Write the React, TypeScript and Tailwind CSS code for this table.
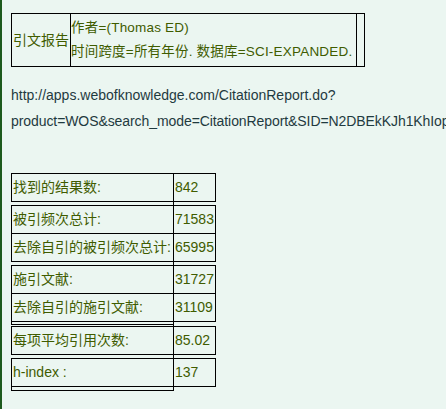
import React from 'react';

const stats = [
    [{ label: '找到的结果数:', value: '842' }],
    [
        { label: '被引频次总计:', value: '71583' },
        { label: '去除自引的被引频次总计:', value: '65995' },
    ],
    [
        { label: '施引文献:', value: '31727' },
        { label: '去除自引的施引文献:', value: '31109' },
    ],
    [{ label: '每项平均引用次数:', value: '85.02' }],
    [{ label: 'h-index :', value: '137' }],
];

// tables 3 and 5 have a left cell that hangs a little below the row
const tails: Record<number, string> = { 2: 'h-[3px]', 4: 'h-[4px]' };

const App: React.FC = () => {
    return (
        <div
            className="min-h-[409px] w-[446px] overflow-hidden border-l-2 border-[#1d5a1d] bg-[#ebf6f1] text-[14px] text-[#3f5c00]"
            style={{ fontFamily: '"Liberation Sans", "Noto Sans CJK SC", sans-serif' }}
        >
            <div className="pl-[9px] pt-[13px]">
                <div className="flex h-[54px] w-[354px] border border-black">
                    <div className="flex w-[59px] items-center border-r border-black pl-[1px] leading-none">引文报告</div>
                    <div className="flex w-[286px] flex-col justify-center whitespace-nowrap border-r border-black text-[13.5px] leading-[24px] tracking-[0.2px]">
                        <span>作者=(Thomas ED)</span>
                        <span>时间跨度=所有年份. 数据库=SCI-EXPANDED.</span>
                    </div>
                    <div className="flex-1" />
                </div>

                <div className="mt-[15px] whitespace-nowrap leading-[26px] text-[#1f3a3f]">
                    <div>http://apps.webofknowledge.com/CitationReport.do?</div>
                    <div className="tracking-[-0.08px]">product=WOS&amp;search_mode=CitationReport&amp;SID=N2DBEkKJh1KhIop</div>
                </div>

                <div className="mt-[39px] flex w-[205px] flex-col">
                    {stats.map((group, gi) => (
                        <React.Fragment key={gi}>
                            <div className="border border-black">
                                {group.map((row, ri) => (
                                    <div
                                        key={row.label}
                                        className={`flex h-[27px] items-center ${ri > 0 ? 'box-content border-t border-black' : ''}`}
                                    >
                                        <div className="flex h-full w-[162px] items-center whitespace-nowrap border-r border-black pl-[1px]">
                                            {row.label}
                                        </div>
                                        <div className="pl-[1px]">{row.value}</div>
                                    </div>
                                ))}
                            </div>
                            {tails[gi] && <div className={`${tails[gi]} w-[163px] border-x border-b border-black`} />}
                            {gi < stats.length - 1 && (
                                <div className={`${tails[gi] ? 'h-px' : 'h-[3px]'} w-[163px] border-r border-black`} />
                            )}
                        </React.Fragment>
                    ))}
                </div>
            </div>
        </div>
    );
};

export default App;
